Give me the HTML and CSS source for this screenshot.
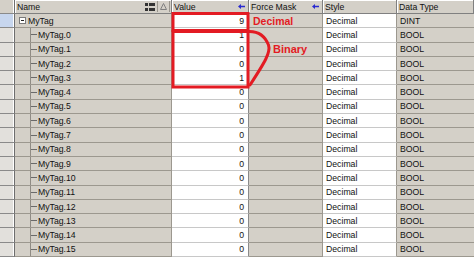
FILE: index.html
```html
<!DOCTYPE html>
<html>
<head>
<meta charset="utf-8">
<link rel="stylesheet" href="styles.css">
</head>
<body>
<div class="grid">
  <div class="hd gut"></div>
  <div class="hd name-h"><span>Name</span><span class="hicons"><svg width="10" height="8" viewBox="0 0 10 8"><rect x="0" y="0" width="3" height="3" fill="#333"/><rect x="4" y="0" width="6" height="3" fill="#333"/><rect x="0" y="5" width="3" height="3" fill="#333"/><rect x="4" y="5" width="6" height="3" fill="#333"/></svg><span class="hsep"></span><svg width="7" height="7" viewBox="0 0 7 7"><path d="M3.5 0.5 L6.5 6.5 L0.5 6.5 Z" fill="none" stroke="#808080" stroke-width="1"/></svg><span class="hsep"></span></span></div>
  <div class="hd"><span>Value</span><svg class="arrow" width="7" height="5" viewBox="0 0 7 5"><path d="M0 2.5 L3 0 L3 1.8 L7 1.8 L7 3.2 L3 3.2 L3 5 Z" fill="#2a2ad0"/></svg></div>
  <div class="hd"><span>Force Mask</span><svg class="arrow" width="7" height="5" viewBox="0 0 7 5"><path d="M0 2.5 L3 0 L3 1.8 L7 1.8 L7 3.2 L3 3.2 L3 5 Z" fill="#2a2ad0"/></svg></div>
  <div class="hd">Style</div>
  <div class="hd last">Data Type</div>

  <div class="gut sel"></div><div class="nm root"><span class="box"></span>MyTag</div><div class="val">9</div><div class="fm"></div><div class="sty">Decimal</div><div class="dt">DINT</div>
  <div class="gut"></div><div class="nm"><span class="ind"></span><span class="dash"></span>MyTag.0</div><div class="val">1</div><div class="fm"></div><div class="sty">Decimal</div><div class="dt">BOOL</div>
  <div class="gut"></div><div class="nm"><span class="ind"></span><span class="dash"></span>MyTag.1</div><div class="val">0</div><div class="fm"></div><div class="sty">Decimal</div><div class="dt">BOOL</div>
  <div class="gut"></div><div class="nm"><span class="ind"></span><span class="dash"></span>MyTag.2</div><div class="val">0</div><div class="fm"></div><div class="sty">Decimal</div><div class="dt">BOOL</div>
  <div class="gut"></div><div class="nm"><span class="ind"></span><span class="dash"></span>MyTag.3</div><div class="val">1</div><div class="fm"></div><div class="sty">Decimal</div><div class="dt">BOOL</div>
  <div class="gut"></div><div class="nm"><span class="ind"></span><span class="dash"></span>MyTag.4</div><div class="val">0</div><div class="fm"></div><div class="sty">Decimal</div><div class="dt">BOOL</div>
  <div class="gut"></div><div class="nm"><span class="ind"></span><span class="dash"></span>MyTag.5</div><div class="val">0</div><div class="fm"></div><div class="sty">Decimal</div><div class="dt">BOOL</div>
  <div class="gut"></div><div class="nm"><span class="ind"></span><span class="dash"></span>MyTag.6</div><div class="val">0</div><div class="fm"></div><div class="sty">Decimal</div><div class="dt">BOOL</div>
  <div class="gut"></div><div class="nm"><span class="ind"></span><span class="dash"></span>MyTag.7</div><div class="val">0</div><div class="fm"></div><div class="sty">Decimal</div><div class="dt">BOOL</div>
  <div class="gut"></div><div class="nm"><span class="ind"></span><span class="dash"></span>MyTag.8</div><div class="val">0</div><div class="fm"></div><div class="sty">Decimal</div><div class="dt">BOOL</div>
  <div class="gut"></div><div class="nm"><span class="ind"></span><span class="dash"></span>MyTag.9</div><div class="val">0</div><div class="fm"></div><div class="sty">Decimal</div><div class="dt">BOOL</div>
  <div class="gut"></div><div class="nm"><span class="ind"></span><span class="dash"></span>MyTag.10</div><div class="val">0</div><div class="fm"></div><div class="sty">Decimal</div><div class="dt">BOOL</div>
  <div class="gut"></div><div class="nm"><span class="ind"></span><span class="dash"></span>MyTag.11</div><div class="val">0</div><div class="fm"></div><div class="sty">Decimal</div><div class="dt">BOOL</div>
  <div class="gut"></div><div class="nm"><span class="ind"></span><span class="dash"></span>MyTag.12</div><div class="val">0</div><div class="fm"></div><div class="sty">Decimal</div><div class="dt">BOOL</div>
  <div class="gut"></div><div class="nm"><span class="ind"></span><span class="dash"></span>MyTag.13</div><div class="val">0</div><div class="fm"></div><div class="sty">Decimal</div><div class="dt">BOOL</div>
  <div class="gut"></div><div class="nm"><span class="ind"></span><span class="dash"></span>MyTag.14</div><div class="val">0</div><div class="fm"></div><div class="sty">Decimal</div><div class="dt">BOOL</div>
  <div class="gut"></div><div class="nm"><span class="ind"></span><span class="dash"></span>MyTag.15</div><div class="val">0</div><div class="fm"></div><div class="sty">Decimal</div><div class="dt">BOOL</div>

  <svg class="marks" width="474" height="257" viewBox="0 0 474 257">
    <rect x="173" y="13.5" width="75" height="17" fill="none" stroke="#e31b23" stroke-width="3"/>
    <rect x="173" y="31.5" width="75" height="55.5" fill="none" stroke="#e31b23" stroke-width="3"/>
    <path d="M248 31.5 C 258 31 265 36 268.5 45 C 271 52 265 62 250 85" fill="none" stroke="#e31b23" stroke-width="3" stroke-linecap="round"/>
  </svg>
  <span class="label lab-dec">Decimal</span>
  <span class="label lab-bin">Binary</span>
</div>
</body>
</html>
```
FILE: styles.css
```css
html, body {
  margin: 0;
  padding: 0;
  background: #d4d0c8;
}
body {
  font-family: "Liberation Sans", Arial, sans-serif;
  font-size: 8.7px;
  color: #111;
}
.grid {
  position: relative;
  display: grid;
  grid-template-columns: 15px 157px 77px 74px 74px 77px;
  grid-template-rows: 14px repeat(17, 14.3px);
  width: 474px;
  height: 257px;
  overflow: hidden;
}
.grid > div {
  box-sizing: border-box;
  display: flex;
  align-items: center;
  white-space: nowrap;
  overflow: hidden;
  border-right: 1px solid #9c988f;
  border-bottom: 1px solid #9c988f;
}
.hd {
  background: #d4d0c8;
  padding-left: 2px;
  box-shadow: inset 1px 1px 0 #fff;
  border-right: 1px solid #808080 !important;
  border-bottom: 1px solid #808080 !important;
}
.hd .arrow {
  margin-left: auto;
  margin-right: 3px;
}
.name-h {
  padding-left: 2px;
}
.hicons {
  margin-left: auto;
  display: flex;
  align-items: center;
  gap: 1px;
  height: 100%;
}
.hsep {
  width: 1px;
  height: 11px;
  background: #9a968e;
  margin: 0 1px;
}
.gut {
  background: #e2e0dc;
  border-right: 1px solid #6e6e6e !important;
  border-bottom: 1px solid #8a8a8a !important;
  box-shadow: inset -1px 0 0 #fff;
}
.gut.sel {
  background: #c7d6ee;
}
.hd.gut {
  background: #d4d0c8;
}
.nm {
  background: #d4d0c8;
  padding-left: 0;
}
.nm.root {
  padding-left: 4px;
}
.box {
  box-sizing: border-box;
  width: 7px;
  height: 7px;
  border: 1px solid #7a7a7a;
  background: #fff;
  margin-right: 2px;
  display: flex;
  align-items: center;
  justify-content: center;
}
.box::after {
  content: "";
  width: 3px;
  height: 1px;
  background: #222;
}
.ind {
  align-self: stretch;
  width: 16px;
  border-right: 1px solid #8f8b84;
  box-sizing: border-box;
  flex: none;
}
.dash {
  width: 6px;
  height: 1px;
  background: #6a6a6a;
  margin-right: 1px;
  flex: none;
}
.val {
  background: #fff;
  justify-content: flex-end;
  padding-right: 4px;
  border-bottom-color: #c8c8c8 !important;
  border-right-color: #8a8a8a !important;
}
.fm {
  background: #d4d0c8;
}
.sty {
  background: #fff;
  padding-left: 3px;
  border-bottom-color: #c8c8c8 !important;
}
.dt {
  background: #d4d0c8;
  padding-left: 3px;
  border-right: none !important;
}
.marks {
  position: absolute;
  left: 0;
  top: 0;
  pointer-events: none;
}
.label {
  position: absolute;
  color: #e31b23;
  font-weight: bold;
  line-height: 12px;
}
.lab-dec {
  left: 253px;
  top: 15px;
  font-size: 10.5px;
}
.lab-bin {
  left: 273px;
  top: 43px;
  font-size: 11px;
}
```
